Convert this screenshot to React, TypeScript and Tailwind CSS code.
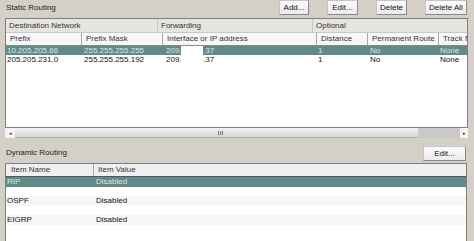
import React from "react";

const Btn = ({ label, w }: { label: string; w: string }) => (
  <div
    className={`${w} h-[15px] flex items-center justify-center bg-gradient-to-b from-[#fbfbfb] to-[#ebebeb] border border-[#c4c4c4] border-r-[#8a8a8a] border-b-[#8a8a8a] text-[#111] whitespace-nowrap`}
  >
    {label}
  </div>
);

const Redact = ({ a, b }: { a: string; b: string }) => (
  <div className="flex h-full items-center">
    <span className="w-[15px] whitespace-nowrap overflow-hidden">{a}</span>
    <span className="w-[22px] h-full bg-white" />
    <span>{b}</span>
  </div>
);

export default function App() {
  return (
    <div
      className="w-[474px] h-[241px] bg-[#d4d0c8] overflow-hidden text-[8px] leading-none text-[#111]"
      style={{ fontFamily: '"Liberation Sans", Arial, sans-serif' }}
    >
      {/* top bar */}
      <div className="h-[18px] flex items-start">
        <div className="pl-[6px] pt-[4px] text-[#222]">Static Routing</div>
        <div className="ml-auto mr-[7px] flex gap-[18px]">
          <Btn label="Add..." w="w-[30px]" />
          <Btn label="Edit..." w="w-[31px]" />
          <Btn label="Delete" w="w-[31px]" />
          <Btn label="Delete All" w="w-[42px]" />
        </div>
      </div>
      {/* static table */}
      <div className="ml-[5px] w-[463px] h-[110px] border border-[#7e7e7e] bg-white flex flex-col">
        <div className="h-[14px] flex bg-[#e6e4e0] border-b border-[#c8c8c8] text-[#333]">
          <div className="w-[152px] pl-[3px] flex items-center border-r border-[#c8c8c8]">Destination Network</div>
          <div className="w-[155px] pl-[3px] flex items-center border-r border-[#c8c8c8]">Forwarding</div>
          <div className="flex-1 pl-[3px] flex items-center">Optional</div>
        </div>
        <div className="h-[13px] flex bg-[#f7f7f7] border-b border-[#888] text-[#333]">
          <div className="w-[76px] pl-[4px] flex items-center border-r border-[#a8a8a8]">Prefix</div>
          <div className="w-[81px] pl-[4px] flex items-center border-r border-[#a8a8a8]">Prefix Mask</div>
          <div className="w-[154px] pl-[4px] flex items-center border-r border-[#a8a8a8]">Interface or IP address</div>
          <div className="w-[51px] pl-[4px] flex items-center border-r border-[#a8a8a8]">Distance</div>
          <div className="w-[71px] pl-[4px] flex items-center border-r border-[#a8a8a8]">Permanent Route</div>
          <div className="flex-1 pl-[4px] flex items-center overflow-hidden whitespace-nowrap">Track N</div>
        </div>
        <div className="h-[9px] flex bg-[#618a8a] text-[#dde8e8]">
          <div className="w-[76px] pl-[1px] flex items-center">10.205.205.66</div>
          <div className="w-[81px] pl-[2px] flex items-center">255.255.255.255</div>
          <div className="w-[154px] pl-[3px]"><Redact a="209." b=".37" /></div>
          <div className="w-[51px] pl-[1px] flex items-center">1</div>
          <div className="w-[71px] pl-[2px] flex items-center">No</div>
          <div className="flex-1 pl-[1px] flex items-center">None</div>
        </div>
        <div className="h-[9px] flex">
          <div className="w-[76px] pl-[1px] flex items-center">205.205.231.0</div>
          <div className="w-[81px] pl-[2px] flex items-center">255.255.255.192</div>
          <div className="w-[154px] pl-[3px]"><Redact a="209.4" b=".37" /></div>
          <div className="w-[51px] pl-[1px] flex items-center">1</div>
          <div className="w-[71px] pl-[2px] flex items-center">No</div>
          <div className="flex-1 pl-[1px] flex items-center">None</div>
        </div>
      </div>
      {/* scrollbar */}
      <div className="ml-[5px] w-[463px] h-[10px] flex bg-[#c9c9c9]">
        <div className="w-[10px] h-full bg-[#f4f4f4] flex items-center justify-center text-[5px] text-[#333]">◂</div>
        <div className="w-[403px] h-full bg-gradient-to-b from-[#f2f2f2] to-[#d6d6d6] border-b border-[#b0b0b0] flex items-center justify-center">
          <div className="flex gap-[1px] ml-[7px]">
            <span className="w-px h-[4px] bg-[#777]" />
            <span className="w-px h-[4px] bg-[#777]" />
            <span className="w-px h-[4px] bg-[#777]" />
          </div>
        </div>
        <div className="flex-1" />
        <div className="w-[8px] h-full bg-[#f4f4f4] flex items-center justify-center text-[5px] text-[#333]">▸</div>
      </div>
      {/* dynamic header */}
      <div className="h-[25px] flex items-end">
        <div className="pl-[6px] pb-[6px] text-[#222]">Dynamic Routing</div>
        <div className="ml-auto mr-[8px] mb-[2px]">
          <Btn label="Edit..." w="w-[43px]" />
        </div>
      </div>
      {/* dynamic table */}
      <div className="ml-[5px] w-[462px] h-[90px] border-t border-l border-r border-[#7e7e7e] bg-white flex flex-col">
        <div className="h-[13px] flex bg-[#f0f0f0] border-b border-[#555] text-[#333]">
          <div className="w-[88px] pl-[5px] flex items-center border-r border-[#a8a8a8]">Item Name</div>
          <div className="flex-1 pl-[4px] flex items-center">Item Value</div>
        </div>
        <div className="h-[10px] flex bg-[#618a8a] text-[#dde8e8]">
          <div className="w-[88px] pl-[1px] flex items-center">RIP</div>
          <div className="flex-1 pl-[2px] flex items-center">Disabled</div>
        </div>
        <div className="h-[9px]" />
        <div className="h-[10px] flex bg-[#f6f6f6]">
          <div className="w-[88px] pl-[1px] flex items-center">OSPF</div>
          <div className="flex-1 pl-[2px] flex items-center">Disabled</div>
        </div>
        <div className="h-[9px]" />
        <div className="h-[10px] flex bg-[#f6f6f6]">
          <div className="w-[88px] pl-[1px] flex items-center">EIGRP</div>
          <div className="flex-1 pl-[2px] flex items-center">Disabled</div>
        </div>
      </div>
    </div>
  );
}
